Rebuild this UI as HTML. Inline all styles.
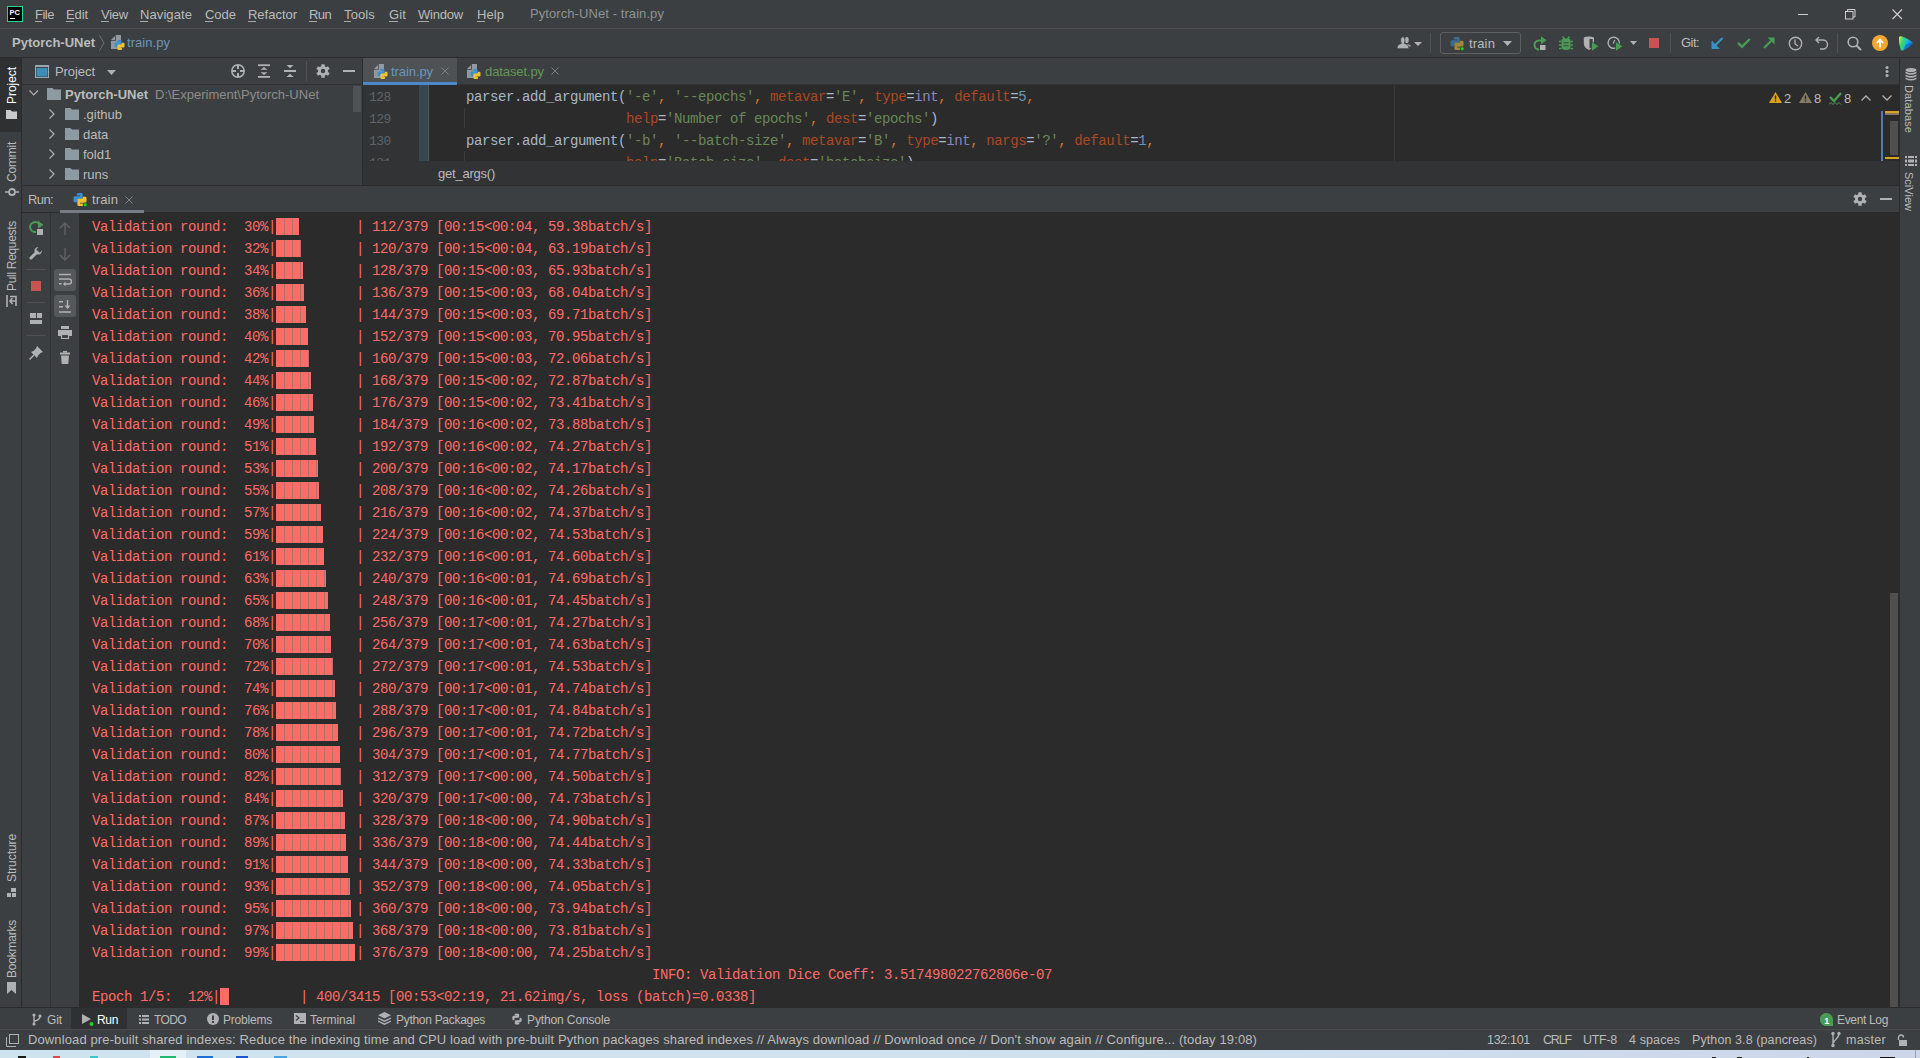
<!DOCTYPE html>
<html><head><meta charset="utf-8"><style>
*{margin:0;padding:0;box-sizing:border-box}
html,body{width:1920px;height:1058px;overflow:hidden;background:#3C3F41;position:relative}
.a{position:absolute}
.t{position:absolute;white-space:pre}
.code{position:absolute;margin-top:-11px;font-family:"Liberation Mono",monospace;font-size:14px;letter-spacing:-0.401px;line-height:14px;white-space:pre}
.lnum{position:absolute;left:369px;margin-top:-10px;font-family:"Liberation Mono",monospace;font-size:13px;letter-spacing:-0.6px;line-height:14px;color:#606366;white-space:pre}
.mono{position:absolute;left:92px;margin-top:-10px;font-family:"Liberation Mono",monospace;font-size:14px;letter-spacing:-0.401px;line-height:14px;color:#FF6B68;white-space:pre}
</style></head><body>
<div class="a" style="left:0px;top:0px;width:1920px;height:1058px;background:#3C3F41;"></div>
<div class="a" style="left:0px;top:28px;width:1920px;height:1px;background:#515151;"></div>
<div class="a" style="left:0px;top:57px;width:1920px;height:1px;background:#2B2B2B;"></div>
<div class="a" style="left:21px;top:58px;width:1px;height:949px;background:#2B2B2B;"></div>
<div class="a" style="left:0px;top:58px;width:21px;height:74px;background:#2E3032;"></div>
<div class="a" style="left:1899px;top:58px;width:1px;height:949px;background:#2B2B2B;"></div>
<div class="a" style="left:362px;top:58px;width:1px;height:127px;background:#2B2B2B;"></div>
<div class="a" style="left:22px;top:84px;width:340px;height:1px;background:#323232;"></div>
<div class="a" style="left:363px;top:58px;width:94px;height:24px;background:#4E5254;"></div>
<div class="a" style="left:363px;top:82px;width:94px;height:3px;background:#4A88C7;"></div>
<div class="a" style="left:457px;top:84px;width:1442px;height:1px;background:#323232;"></div>
<div class="a" style="left:363px;top:85px;width:1536px;height:76px;background:#2B2B2B;"></div>
<div class="a" style="left:363px;top:85px;width:56px;height:76px;background:#313335;"></div>
<div class="a" style="left:419px;top:85px;width:9px;height:76px;background:#374752;"></div>
<div class="a" style="left:428px;top:85px;width:1px;height:76px;background:#555555;"></div>
<div class="a" style="left:363px;top:161px;width:1536px;height:24px;background:#313335;"></div>
<div class="a" style="left:363px;top:161px;width:1536px;height:1px;background:#323232;"></div>
<div class="a" style="left:22px;top:185px;width:1877px;height:1px;background:#2B2B2B;"></div>
<div class="a" style="left:50px;top:213px;width:1px;height:794px;background:#323232;"></div>
<div class="a" style="left:79px;top:213px;width:1820px;height:794px;background:#2B2B2B;"></div>
<div class="a" style="left:22px;top:212px;width:1877px;height:1px;background:#2B2B2B;"></div>
<div class="a" style="left:60px;top:210px;width:84px;height:3px;background:#787C84;"></div>
<div class="a" style="left:0px;top:1007px;width:1920px;height:1px;background:#2B2B2B;"></div>
<div class="a" style="left:71px;top:1008px;width:56px;height:21px;background:#2E3032;"></div>
<div class="a" style="left:0px;top:1029px;width:1920px;height:1px;background:#4A4A4A;"></div>
<div class="a" style="left:0px;top:1050px;width:1920px;height:8px;background:#CFE3EE;"></div>
<div class="mono" style="top:230px">Validation round:  30%|          | 112/379 [00:15&lt;00:04, 59.38batch/s]</div>
<div class="a" style="left:276px;top:218px;width:23px;height:17px;background:#FF6B68;"></div>
<div class="a" style="left:284px;top:218px;width:1px;height:17px;background:#B86E6B;"></div>
<div class="a" style="left:292px;top:218px;width:1px;height:17px;background:#B86E6B;"></div>
<div class="mono" style="top:252px">Validation round:  32%|          | 120/379 [00:15&lt;00:04, 63.19batch/s]</div>
<div class="a" style="left:276px;top:240px;width:25px;height:17px;background:#FF6B68;"></div>
<div class="a" style="left:284px;top:240px;width:1px;height:17px;background:#B86E6B;"></div>
<div class="a" style="left:292px;top:240px;width:1px;height:17px;background:#B86E6B;"></div>
<div class="a" style="left:300px;top:240px;width:1px;height:17px;background:#B86E6B;"></div>
<div class="mono" style="top:274px">Validation round:  34%|          | 128/379 [00:15&lt;00:03, 65.93batch/s]</div>
<div class="a" style="left:276px;top:262px;width:27px;height:17px;background:#FF6B68;"></div>
<div class="a" style="left:284px;top:262px;width:1px;height:17px;background:#B86E6B;"></div>
<div class="a" style="left:292px;top:262px;width:1px;height:17px;background:#B86E6B;"></div>
<div class="a" style="left:300px;top:262px;width:1px;height:17px;background:#B86E6B;"></div>
<div class="mono" style="top:296px">Validation round:  36%|          | 136/379 [00:15&lt;00:03, 68.04batch/s]</div>
<div class="a" style="left:276px;top:284px;width:28px;height:17px;background:#FF6B68;"></div>
<div class="a" style="left:284px;top:284px;width:1px;height:17px;background:#B86E6B;"></div>
<div class="a" style="left:292px;top:284px;width:1px;height:17px;background:#B86E6B;"></div>
<div class="a" style="left:300px;top:284px;width:1px;height:17px;background:#B86E6B;"></div>
<div class="mono" style="top:318px">Validation round:  38%|          | 144/379 [00:15&lt;00:03, 69.71batch/s]</div>
<div class="a" style="left:276px;top:306px;width:30px;height:17px;background:#FF6B68;"></div>
<div class="a" style="left:284px;top:306px;width:1px;height:17px;background:#B86E6B;"></div>
<div class="a" style="left:292px;top:306px;width:1px;height:17px;background:#B86E6B;"></div>
<div class="a" style="left:300px;top:306px;width:1px;height:17px;background:#B86E6B;"></div>
<div class="mono" style="top:340px">Validation round:  40%|          | 152/379 [00:15&lt;00:03, 70.95batch/s]</div>
<div class="a" style="left:276px;top:328px;width:32px;height:17px;background:#FF6B68;"></div>
<div class="a" style="left:284px;top:328px;width:1px;height:17px;background:#B86E6B;"></div>
<div class="a" style="left:292px;top:328px;width:1px;height:17px;background:#B86E6B;"></div>
<div class="a" style="left:300px;top:328px;width:1px;height:17px;background:#B86E6B;"></div>
<div class="mono" style="top:362px">Validation round:  42%|          | 160/379 [00:15&lt;00:03, 72.06batch/s]</div>
<div class="a" style="left:276px;top:350px;width:33px;height:17px;background:#FF6B68;"></div>
<div class="a" style="left:284px;top:350px;width:1px;height:17px;background:#B86E6B;"></div>
<div class="a" style="left:292px;top:350px;width:1px;height:17px;background:#B86E6B;"></div>
<div class="a" style="left:300px;top:350px;width:1px;height:17px;background:#B86E6B;"></div>
<div class="a" style="left:308px;top:350px;width:1px;height:17px;background:#B86E6B;"></div>
<div class="mono" style="top:384px">Validation round:  44%|          | 168/379 [00:15&lt;00:02, 72.87batch/s]</div>
<div class="a" style="left:276px;top:372px;width:35px;height:17px;background:#FF6B68;"></div>
<div class="a" style="left:284px;top:372px;width:1px;height:17px;background:#B86E6B;"></div>
<div class="a" style="left:292px;top:372px;width:1px;height:17px;background:#B86E6B;"></div>
<div class="a" style="left:300px;top:372px;width:1px;height:17px;background:#B86E6B;"></div>
<div class="a" style="left:308px;top:372px;width:1px;height:17px;background:#B86E6B;"></div>
<div class="mono" style="top:406px">Validation round:  46%|          | 176/379 [00:15&lt;00:02, 73.41batch/s]</div>
<div class="a" style="left:276px;top:394px;width:37px;height:17px;background:#FF6B68;"></div>
<div class="a" style="left:284px;top:394px;width:1px;height:17px;background:#B86E6B;"></div>
<div class="a" style="left:292px;top:394px;width:1px;height:17px;background:#B86E6B;"></div>
<div class="a" style="left:300px;top:394px;width:1px;height:17px;background:#B86E6B;"></div>
<div class="a" style="left:308px;top:394px;width:1px;height:17px;background:#B86E6B;"></div>
<div class="mono" style="top:428px">Validation round:  49%|          | 184/379 [00:16&lt;00:02, 73.88batch/s]</div>
<div class="a" style="left:276px;top:416px;width:38px;height:17px;background:#FF6B68;"></div>
<div class="a" style="left:284px;top:416px;width:1px;height:17px;background:#B86E6B;"></div>
<div class="a" style="left:292px;top:416px;width:1px;height:17px;background:#B86E6B;"></div>
<div class="a" style="left:300px;top:416px;width:1px;height:17px;background:#B86E6B;"></div>
<div class="a" style="left:308px;top:416px;width:1px;height:17px;background:#B86E6B;"></div>
<div class="mono" style="top:450px">Validation round:  51%|          | 192/379 [00:16&lt;00:02, 74.27batch/s]</div>
<div class="a" style="left:276px;top:438px;width:40px;height:17px;background:#FF6B68;"></div>
<div class="a" style="left:284px;top:438px;width:1px;height:17px;background:#B86E6B;"></div>
<div class="a" style="left:292px;top:438px;width:1px;height:17px;background:#B86E6B;"></div>
<div class="a" style="left:300px;top:438px;width:1px;height:17px;background:#B86E6B;"></div>
<div class="a" style="left:308px;top:438px;width:1px;height:17px;background:#B86E6B;"></div>
<div class="mono" style="top:472px">Validation round:  53%|          | 200/379 [00:16&lt;00:02, 74.17batch/s]</div>
<div class="a" style="left:276px;top:460px;width:42px;height:17px;background:#FF6B68;"></div>
<div class="a" style="left:284px;top:460px;width:1px;height:17px;background:#B86E6B;"></div>
<div class="a" style="left:292px;top:460px;width:1px;height:17px;background:#B86E6B;"></div>
<div class="a" style="left:300px;top:460px;width:1px;height:17px;background:#B86E6B;"></div>
<div class="a" style="left:308px;top:460px;width:1px;height:17px;background:#B86E6B;"></div>
<div class="a" style="left:316px;top:460px;width:1px;height:17px;background:#B86E6B;"></div>
<div class="mono" style="top:494px">Validation round:  55%|          | 208/379 [00:16&lt;00:02, 74.26batch/s]</div>
<div class="a" style="left:276px;top:482px;width:43px;height:17px;background:#FF6B68;"></div>
<div class="a" style="left:284px;top:482px;width:1px;height:17px;background:#B86E6B;"></div>
<div class="a" style="left:292px;top:482px;width:1px;height:17px;background:#B86E6B;"></div>
<div class="a" style="left:300px;top:482px;width:1px;height:17px;background:#B86E6B;"></div>
<div class="a" style="left:308px;top:482px;width:1px;height:17px;background:#B86E6B;"></div>
<div class="a" style="left:316px;top:482px;width:1px;height:17px;background:#B86E6B;"></div>
<div class="mono" style="top:516px">Validation round:  57%|          | 216/379 [00:16&lt;00:02, 74.37batch/s]</div>
<div class="a" style="left:276px;top:504px;width:45px;height:17px;background:#FF6B68;"></div>
<div class="a" style="left:284px;top:504px;width:1px;height:17px;background:#B86E6B;"></div>
<div class="a" style="left:292px;top:504px;width:1px;height:17px;background:#B86E6B;"></div>
<div class="a" style="left:300px;top:504px;width:1px;height:17px;background:#B86E6B;"></div>
<div class="a" style="left:308px;top:504px;width:1px;height:17px;background:#B86E6B;"></div>
<div class="a" style="left:316px;top:504px;width:1px;height:17px;background:#B86E6B;"></div>
<div class="mono" style="top:538px">Validation round:  59%|          | 224/379 [00:16&lt;00:02, 74.53batch/s]</div>
<div class="a" style="left:276px;top:526px;width:47px;height:17px;background:#FF6B68;"></div>
<div class="a" style="left:284px;top:526px;width:1px;height:17px;background:#B86E6B;"></div>
<div class="a" style="left:292px;top:526px;width:1px;height:17px;background:#B86E6B;"></div>
<div class="a" style="left:300px;top:526px;width:1px;height:17px;background:#B86E6B;"></div>
<div class="a" style="left:308px;top:526px;width:1px;height:17px;background:#B86E6B;"></div>
<div class="a" style="left:316px;top:526px;width:1px;height:17px;background:#B86E6B;"></div>
<div class="mono" style="top:560px">Validation round:  61%|          | 232/379 [00:16&lt;00:01, 74.60batch/s]</div>
<div class="a" style="left:276px;top:548px;width:48px;height:17px;background:#FF6B68;"></div>
<div class="a" style="left:284px;top:548px;width:1px;height:17px;background:#B86E6B;"></div>
<div class="a" style="left:292px;top:548px;width:1px;height:17px;background:#B86E6B;"></div>
<div class="a" style="left:300px;top:548px;width:1px;height:17px;background:#B86E6B;"></div>
<div class="a" style="left:308px;top:548px;width:1px;height:17px;background:#B86E6B;"></div>
<div class="a" style="left:316px;top:548px;width:1px;height:17px;background:#B86E6B;"></div>
<div class="mono" style="top:582px">Validation round:  63%|          | 240/379 [00:16&lt;00:01, 74.69batch/s]</div>
<div class="a" style="left:276px;top:570px;width:50px;height:17px;background:#FF6B68;"></div>
<div class="a" style="left:284px;top:570px;width:1px;height:17px;background:#B86E6B;"></div>
<div class="a" style="left:292px;top:570px;width:1px;height:17px;background:#B86E6B;"></div>
<div class="a" style="left:300px;top:570px;width:1px;height:17px;background:#B86E6B;"></div>
<div class="a" style="left:308px;top:570px;width:1px;height:17px;background:#B86E6B;"></div>
<div class="a" style="left:316px;top:570px;width:1px;height:17px;background:#B86E6B;"></div>
<div class="a" style="left:324px;top:570px;width:1px;height:17px;background:#B86E6B;"></div>
<div class="mono" style="top:604px">Validation round:  65%|          | 248/379 [00:16&lt;00:01, 74.45batch/s]</div>
<div class="a" style="left:276px;top:592px;width:52px;height:17px;background:#FF6B68;"></div>
<div class="a" style="left:284px;top:592px;width:1px;height:17px;background:#B86E6B;"></div>
<div class="a" style="left:292px;top:592px;width:1px;height:17px;background:#B86E6B;"></div>
<div class="a" style="left:300px;top:592px;width:1px;height:17px;background:#B86E6B;"></div>
<div class="a" style="left:308px;top:592px;width:1px;height:17px;background:#B86E6B;"></div>
<div class="a" style="left:316px;top:592px;width:1px;height:17px;background:#B86E6B;"></div>
<div class="a" style="left:324px;top:592px;width:1px;height:17px;background:#B86E6B;"></div>
<div class="mono" style="top:626px">Validation round:  68%|          | 256/379 [00:17&lt;00:01, 74.27batch/s]</div>
<div class="a" style="left:276px;top:614px;width:54px;height:17px;background:#FF6B68;"></div>
<div class="a" style="left:284px;top:614px;width:1px;height:17px;background:#B86E6B;"></div>
<div class="a" style="left:292px;top:614px;width:1px;height:17px;background:#B86E6B;"></div>
<div class="a" style="left:300px;top:614px;width:1px;height:17px;background:#B86E6B;"></div>
<div class="a" style="left:308px;top:614px;width:1px;height:17px;background:#B86E6B;"></div>
<div class="a" style="left:316px;top:614px;width:1px;height:17px;background:#B86E6B;"></div>
<div class="a" style="left:324px;top:614px;width:1px;height:17px;background:#B86E6B;"></div>
<div class="mono" style="top:648px">Validation round:  70%|          | 264/379 [00:17&lt;00:01, 74.63batch/s]</div>
<div class="a" style="left:276px;top:636px;width:55px;height:17px;background:#FF6B68;"></div>
<div class="a" style="left:284px;top:636px;width:1px;height:17px;background:#B86E6B;"></div>
<div class="a" style="left:292px;top:636px;width:1px;height:17px;background:#B86E6B;"></div>
<div class="a" style="left:300px;top:636px;width:1px;height:17px;background:#B86E6B;"></div>
<div class="a" style="left:308px;top:636px;width:1px;height:17px;background:#B86E6B;"></div>
<div class="a" style="left:316px;top:636px;width:1px;height:17px;background:#B86E6B;"></div>
<div class="a" style="left:324px;top:636px;width:1px;height:17px;background:#B86E6B;"></div>
<div class="mono" style="top:670px">Validation round:  72%|          | 272/379 [00:17&lt;00:01, 74.53batch/s]</div>
<div class="a" style="left:276px;top:658px;width:57px;height:17px;background:#FF6B68;"></div>
<div class="a" style="left:284px;top:658px;width:1px;height:17px;background:#B86E6B;"></div>
<div class="a" style="left:292px;top:658px;width:1px;height:17px;background:#B86E6B;"></div>
<div class="a" style="left:300px;top:658px;width:1px;height:17px;background:#B86E6B;"></div>
<div class="a" style="left:308px;top:658px;width:1px;height:17px;background:#B86E6B;"></div>
<div class="a" style="left:316px;top:658px;width:1px;height:17px;background:#B86E6B;"></div>
<div class="a" style="left:324px;top:658px;width:1px;height:17px;background:#B86E6B;"></div>
<div class="a" style="left:332px;top:658px;width:1px;height:17px;background:#B86E6B;"></div>
<div class="mono" style="top:692px">Validation round:  74%|          | 280/379 [00:17&lt;00:01, 74.74batch/s]</div>
<div class="a" style="left:276px;top:680px;width:59px;height:17px;background:#FF6B68;"></div>
<div class="a" style="left:284px;top:680px;width:1px;height:17px;background:#B86E6B;"></div>
<div class="a" style="left:292px;top:680px;width:1px;height:17px;background:#B86E6B;"></div>
<div class="a" style="left:300px;top:680px;width:1px;height:17px;background:#B86E6B;"></div>
<div class="a" style="left:308px;top:680px;width:1px;height:17px;background:#B86E6B;"></div>
<div class="a" style="left:316px;top:680px;width:1px;height:17px;background:#B86E6B;"></div>
<div class="a" style="left:324px;top:680px;width:1px;height:17px;background:#B86E6B;"></div>
<div class="a" style="left:332px;top:680px;width:1px;height:17px;background:#B86E6B;"></div>
<div class="mono" style="top:714px">Validation round:  76%|          | 288/379 [00:17&lt;00:01, 74.84batch/s]</div>
<div class="a" style="left:276px;top:702px;width:60px;height:17px;background:#FF6B68;"></div>
<div class="a" style="left:284px;top:702px;width:1px;height:17px;background:#B86E6B;"></div>
<div class="a" style="left:292px;top:702px;width:1px;height:17px;background:#B86E6B;"></div>
<div class="a" style="left:300px;top:702px;width:1px;height:17px;background:#B86E6B;"></div>
<div class="a" style="left:308px;top:702px;width:1px;height:17px;background:#B86E6B;"></div>
<div class="a" style="left:316px;top:702px;width:1px;height:17px;background:#B86E6B;"></div>
<div class="a" style="left:324px;top:702px;width:1px;height:17px;background:#B86E6B;"></div>
<div class="a" style="left:332px;top:702px;width:1px;height:17px;background:#B86E6B;"></div>
<div class="mono" style="top:736px">Validation round:  78%|          | 296/379 [00:17&lt;00:01, 74.72batch/s]</div>
<div class="a" style="left:276px;top:724px;width:62px;height:17px;background:#FF6B68;"></div>
<div class="a" style="left:284px;top:724px;width:1px;height:17px;background:#B86E6B;"></div>
<div class="a" style="left:292px;top:724px;width:1px;height:17px;background:#B86E6B;"></div>
<div class="a" style="left:300px;top:724px;width:1px;height:17px;background:#B86E6B;"></div>
<div class="a" style="left:308px;top:724px;width:1px;height:17px;background:#B86E6B;"></div>
<div class="a" style="left:316px;top:724px;width:1px;height:17px;background:#B86E6B;"></div>
<div class="a" style="left:324px;top:724px;width:1px;height:17px;background:#B86E6B;"></div>
<div class="a" style="left:332px;top:724px;width:1px;height:17px;background:#B86E6B;"></div>
<div class="mono" style="top:758px">Validation round:  80%|          | 304/379 [00:17&lt;00:01, 74.77batch/s]</div>
<div class="a" style="left:276px;top:746px;width:64px;height:17px;background:#FF6B68;"></div>
<div class="a" style="left:284px;top:746px;width:1px;height:17px;background:#B86E6B;"></div>
<div class="a" style="left:292px;top:746px;width:1px;height:17px;background:#B86E6B;"></div>
<div class="a" style="left:300px;top:746px;width:1px;height:17px;background:#B86E6B;"></div>
<div class="a" style="left:308px;top:746px;width:1px;height:17px;background:#B86E6B;"></div>
<div class="a" style="left:316px;top:746px;width:1px;height:17px;background:#B86E6B;"></div>
<div class="a" style="left:324px;top:746px;width:1px;height:17px;background:#B86E6B;"></div>
<div class="a" style="left:332px;top:746px;width:1px;height:17px;background:#B86E6B;"></div>
<div class="mono" style="top:780px">Validation round:  82%|          | 312/379 [00:17&lt;00:00, 74.50batch/s]</div>
<div class="a" style="left:276px;top:768px;width:65px;height:17px;background:#FF6B68;"></div>
<div class="a" style="left:284px;top:768px;width:1px;height:17px;background:#B86E6B;"></div>
<div class="a" style="left:292px;top:768px;width:1px;height:17px;background:#B86E6B;"></div>
<div class="a" style="left:300px;top:768px;width:1px;height:17px;background:#B86E6B;"></div>
<div class="a" style="left:308px;top:768px;width:1px;height:17px;background:#B86E6B;"></div>
<div class="a" style="left:316px;top:768px;width:1px;height:17px;background:#B86E6B;"></div>
<div class="a" style="left:324px;top:768px;width:1px;height:17px;background:#B86E6B;"></div>
<div class="a" style="left:332px;top:768px;width:1px;height:17px;background:#B86E6B;"></div>
<div class="a" style="left:340px;top:768px;width:1px;height:17px;background:#B86E6B;"></div>
<div class="mono" style="top:802px">Validation round:  84%|          | 320/379 [00:17&lt;00:00, 74.73batch/s]</div>
<div class="a" style="left:276px;top:790px;width:67px;height:17px;background:#FF6B68;"></div>
<div class="a" style="left:284px;top:790px;width:1px;height:17px;background:#B86E6B;"></div>
<div class="a" style="left:292px;top:790px;width:1px;height:17px;background:#B86E6B;"></div>
<div class="a" style="left:300px;top:790px;width:1px;height:17px;background:#B86E6B;"></div>
<div class="a" style="left:308px;top:790px;width:1px;height:17px;background:#B86E6B;"></div>
<div class="a" style="left:316px;top:790px;width:1px;height:17px;background:#B86E6B;"></div>
<div class="a" style="left:324px;top:790px;width:1px;height:17px;background:#B86E6B;"></div>
<div class="a" style="left:332px;top:790px;width:1px;height:17px;background:#B86E6B;"></div>
<div class="a" style="left:340px;top:790px;width:1px;height:17px;background:#B86E6B;"></div>
<div class="mono" style="top:824px">Validation round:  87%|          | 328/379 [00:18&lt;00:00, 74.90batch/s]</div>
<div class="a" style="left:276px;top:812px;width:69px;height:17px;background:#FF6B68;"></div>
<div class="a" style="left:284px;top:812px;width:1px;height:17px;background:#B86E6B;"></div>
<div class="a" style="left:292px;top:812px;width:1px;height:17px;background:#B86E6B;"></div>
<div class="a" style="left:300px;top:812px;width:1px;height:17px;background:#B86E6B;"></div>
<div class="a" style="left:308px;top:812px;width:1px;height:17px;background:#B86E6B;"></div>
<div class="a" style="left:316px;top:812px;width:1px;height:17px;background:#B86E6B;"></div>
<div class="a" style="left:324px;top:812px;width:1px;height:17px;background:#B86E6B;"></div>
<div class="a" style="left:332px;top:812px;width:1px;height:17px;background:#B86E6B;"></div>
<div class="a" style="left:340px;top:812px;width:1px;height:17px;background:#B86E6B;"></div>
<div class="mono" style="top:846px">Validation round:  89%|          | 336/379 [00:18&lt;00:00, 74.44batch/s]</div>
<div class="a" style="left:276px;top:834px;width:70px;height:17px;background:#FF6B68;"></div>
<div class="a" style="left:284px;top:834px;width:1px;height:17px;background:#B86E6B;"></div>
<div class="a" style="left:292px;top:834px;width:1px;height:17px;background:#B86E6B;"></div>
<div class="a" style="left:300px;top:834px;width:1px;height:17px;background:#B86E6B;"></div>
<div class="a" style="left:308px;top:834px;width:1px;height:17px;background:#B86E6B;"></div>
<div class="a" style="left:316px;top:834px;width:1px;height:17px;background:#B86E6B;"></div>
<div class="a" style="left:324px;top:834px;width:1px;height:17px;background:#B86E6B;"></div>
<div class="a" style="left:332px;top:834px;width:1px;height:17px;background:#B86E6B;"></div>
<div class="a" style="left:340px;top:834px;width:1px;height:17px;background:#B86E6B;"></div>
<div class="mono" style="top:868px">Validation round:  91%|          | 344/379 [00:18&lt;00:00, 74.33batch/s]</div>
<div class="a" style="left:276px;top:856px;width:72px;height:17px;background:#FF6B68;"></div>
<div class="a" style="left:284px;top:856px;width:1px;height:17px;background:#B86E6B;"></div>
<div class="a" style="left:292px;top:856px;width:1px;height:17px;background:#B86E6B;"></div>
<div class="a" style="left:300px;top:856px;width:1px;height:17px;background:#B86E6B;"></div>
<div class="a" style="left:308px;top:856px;width:1px;height:17px;background:#B86E6B;"></div>
<div class="a" style="left:316px;top:856px;width:1px;height:17px;background:#B86E6B;"></div>
<div class="a" style="left:324px;top:856px;width:1px;height:17px;background:#B86E6B;"></div>
<div class="a" style="left:332px;top:856px;width:1px;height:17px;background:#B86E6B;"></div>
<div class="a" style="left:340px;top:856px;width:1px;height:17px;background:#B86E6B;"></div>
<div class="mono" style="top:890px">Validation round:  93%|          | 352/379 [00:18&lt;00:00, 74.05batch/s]</div>
<div class="a" style="left:276px;top:878px;width:74px;height:17px;background:#FF6B68;"></div>
<div class="a" style="left:284px;top:878px;width:1px;height:17px;background:#B86E6B;"></div>
<div class="a" style="left:292px;top:878px;width:1px;height:17px;background:#B86E6B;"></div>
<div class="a" style="left:300px;top:878px;width:1px;height:17px;background:#B86E6B;"></div>
<div class="a" style="left:308px;top:878px;width:1px;height:17px;background:#B86E6B;"></div>
<div class="a" style="left:316px;top:878px;width:1px;height:17px;background:#B86E6B;"></div>
<div class="a" style="left:324px;top:878px;width:1px;height:17px;background:#B86E6B;"></div>
<div class="a" style="left:332px;top:878px;width:1px;height:17px;background:#B86E6B;"></div>
<div class="a" style="left:340px;top:878px;width:1px;height:17px;background:#B86E6B;"></div>
<div class="a" style="left:348px;top:878px;width:1px;height:17px;background:#B86E6B;"></div>
<div class="mono" style="top:912px">Validation round:  95%|          | 360/379 [00:18&lt;00:00, 73.94batch/s]</div>
<div class="a" style="left:276px;top:900px;width:75px;height:17px;background:#FF6B68;"></div>
<div class="a" style="left:284px;top:900px;width:1px;height:17px;background:#B86E6B;"></div>
<div class="a" style="left:292px;top:900px;width:1px;height:17px;background:#B86E6B;"></div>
<div class="a" style="left:300px;top:900px;width:1px;height:17px;background:#B86E6B;"></div>
<div class="a" style="left:308px;top:900px;width:1px;height:17px;background:#B86E6B;"></div>
<div class="a" style="left:316px;top:900px;width:1px;height:17px;background:#B86E6B;"></div>
<div class="a" style="left:324px;top:900px;width:1px;height:17px;background:#B86E6B;"></div>
<div class="a" style="left:332px;top:900px;width:1px;height:17px;background:#B86E6B;"></div>
<div class="a" style="left:340px;top:900px;width:1px;height:17px;background:#B86E6B;"></div>
<div class="a" style="left:348px;top:900px;width:1px;height:17px;background:#B86E6B;"></div>
<div class="mono" style="top:934px">Validation round:  97%|          | 368/379 [00:18&lt;00:00, 73.81batch/s]</div>
<div class="a" style="left:276px;top:922px;width:77px;height:17px;background:#FF6B68;"></div>
<div class="a" style="left:284px;top:922px;width:1px;height:17px;background:#B86E6B;"></div>
<div class="a" style="left:292px;top:922px;width:1px;height:17px;background:#B86E6B;"></div>
<div class="a" style="left:300px;top:922px;width:1px;height:17px;background:#B86E6B;"></div>
<div class="a" style="left:308px;top:922px;width:1px;height:17px;background:#B86E6B;"></div>
<div class="a" style="left:316px;top:922px;width:1px;height:17px;background:#B86E6B;"></div>
<div class="a" style="left:324px;top:922px;width:1px;height:17px;background:#B86E6B;"></div>
<div class="a" style="left:332px;top:922px;width:1px;height:17px;background:#B86E6B;"></div>
<div class="a" style="left:340px;top:922px;width:1px;height:17px;background:#B86E6B;"></div>
<div class="a" style="left:348px;top:922px;width:1px;height:17px;background:#B86E6B;"></div>
<div class="mono" style="top:956px">Validation round:  99%|          | 376/379 [00:18&lt;00:00, 74.25batch/s]</div>
<div class="a" style="left:276px;top:944px;width:79px;height:17px;background:#FF6B68;"></div>
<div class="a" style="left:284px;top:944px;width:1px;height:17px;background:#B86E6B;"></div>
<div class="a" style="left:292px;top:944px;width:1px;height:17px;background:#B86E6B;"></div>
<div class="a" style="left:300px;top:944px;width:1px;height:17px;background:#B86E6B;"></div>
<div class="a" style="left:308px;top:944px;width:1px;height:17px;background:#B86E6B;"></div>
<div class="a" style="left:316px;top:944px;width:1px;height:17px;background:#B86E6B;"></div>
<div class="a" style="left:324px;top:944px;width:1px;height:17px;background:#B86E6B;"></div>
<div class="a" style="left:332px;top:944px;width:1px;height:17px;background:#B86E6B;"></div>
<div class="a" style="left:340px;top:944px;width:1px;height:17px;background:#B86E6B;"></div>
<div class="a" style="left:348px;top:944px;width:1px;height:17px;background:#B86E6B;"></div>
<div class="mono" style="top:978px">                                                                      INFO: Validation Dice Coeff: 3.517498022762806e-07</div>
<div class="mono" style="top:1000px">Epoch 1/5:  12%|          | 400/3415 [00:53&lt;02:19, 21.62img/s, loss (batch)=0.0338]</div>
<div class="a" style="left:220px;top:988px;width:9px;height:17px;background:#FF6B68;"></div>
<div class="a" style="left:1890px;top:593px;width:8px;height:414px;background:#4F4F4F;"></div>
<svg class="a" style="left:7px;top:6px;" width="16" height="16" viewBox="0 0 16 16"><rect x="0.5" y="0.5" width="15" height="15" fill="#000" stroke="#21D789" stroke-width="1"/><text x="2.5" y="9" font-family="Liberation Sans" font-weight="bold" font-size="7.5" fill="#fff">PC</text><rect x="3" y="12" width="5" height="1" fill="#fff"/></svg>
<div class="t" style="left:35px;top:8px;font-size:13px;line-height:13px;color:#BBBBBB;font-family:'Liberation Sans',sans-serif;letter-spacing:-0.487px;">File</div>
<div class="a" style="left:35px;top:21px;width:7px;height:1px;background:#BBBBBB;opacity:.85"></div>
<div class="t" style="left:66px;top:8px;font-size:13px;line-height:13px;color:#BBBBBB;font-family:'Liberation Sans',sans-serif;letter-spacing:-0.100px;">Edit</div>
<div class="a" style="left:66px;top:21px;width:8px;height:1px;background:#BBBBBB;opacity:.85"></div>
<div class="t" style="left:101px;top:8px;font-size:13px;line-height:13px;color:#BBBBBB;font-family:'Liberation Sans',sans-serif;letter-spacing:-0.236px;">View</div>
<div class="a" style="left:101px;top:21px;width:8px;height:1px;background:#BBBBBB;opacity:.85"></div>
<div class="t" style="left:140px;top:8px;font-size:13px;line-height:13px;color:#BBBBBB;font-family:'Liberation Sans',sans-serif;letter-spacing:0.086px;">Navigate</div>
<div class="a" style="left:140px;top:21px;width:8px;height:1px;background:#BBBBBB;opacity:.85"></div>
<div class="t" style="left:205px;top:8px;font-size:13px;line-height:13px;color:#BBBBBB;font-family:'Liberation Sans',sans-serif;letter-spacing:-0.020px;">Code</div>
<div class="a" style="left:205px;top:21px;width:8px;height:1px;background:#BBBBBB;opacity:.85"></div>
<div class="t" style="left:248px;top:8px;font-size:13px;line-height:13px;color:#BBBBBB;font-family:'Liberation Sans',sans-serif;letter-spacing:-0.016px;">Refactor</div>
<div class="a" style="left:248px;top:21px;width:8px;height:1px;background:#BBBBBB;opacity:.85"></div>
<div class="t" style="left:309px;top:8px;font-size:13px;line-height:13px;color:#BBBBBB;font-family:'Liberation Sans',sans-serif;letter-spacing:-0.616px;">Run</div>
<div class="a" style="left:309px;top:21px;width:8px;height:1px;background:#BBBBBB;opacity:.85"></div>
<div class="t" style="left:344px;top:8px;font-size:13px;line-height:13px;color:#BBBBBB;font-family:'Liberation Sans',sans-serif;letter-spacing:0.130px;">Tools</div>
<div class="a" style="left:344px;top:21px;width:7px;height:1px;background:#BBBBBB;opacity:.85"></div>
<div class="t" style="left:389px;top:8px;font-size:13px;line-height:13px;color:#BBBBBB;font-family:'Liberation Sans',sans-serif;letter-spacing:0.129px;">Git</div>
<div class="a" style="left:389px;top:21px;width:9px;height:1px;background:#BBBBBB;opacity:.85"></div>
<div class="t" style="left:418px;top:8px;font-size:13px;line-height:13px;color:#BBBBBB;font-family:'Liberation Sans',sans-serif;letter-spacing:-0.206px;">Window</div>
<div class="a" style="left:418px;top:21px;width:11px;height:1px;background:#BBBBBB;opacity:.85"></div>
<div class="t" style="left:477px;top:8px;font-size:13px;line-height:13px;color:#BBBBBB;font-family:'Liberation Sans',sans-serif;letter-spacing:0.066px;">Help</div>
<div class="a" style="left:477px;top:21px;width:8px;height:1px;background:#BBBBBB;opacity:.85"></div>
<div class="t" style="left:530px;top:7px;font-size:13px;line-height:13px;color:#8F9294;font-family:'Liberation Sans',sans-serif;letter-spacing:0.078px;">Pytorch-UNet - train.py</div>
<div class="a" style="left:1798px;top:14px;width:10px;height:1px;background:#CFCFCF;"></div>
<svg class="a" style="left:1845px;top:9px;" width="11" height="11" viewBox="0 0 11 11"><rect x="0.5" y="2.5" width="7.5" height="7.5" fill="none" stroke="#CFCFCF"/><path d="M2.5 2.5V0.5H10V8H8" fill="none" stroke="#CFCFCF"/></svg>
<svg class="a" style="left:1892px;top:9px;" width="11" height="11" viewBox="0 0 11 11"><path d="M0.5 0.5L10 10M10 0.5L0.5 10" stroke="#CFCFCF" stroke-width="1.1"/></svg>
<div class="t" style="left:12px;top:36px;font-size:13px;line-height:13px;color:#BBBBBB;font-family:'Liberation Sans',sans-serif;font-weight:bold;letter-spacing:-0.005px;">Pytorch-UNet</div>
<svg class="a" style="left:99px;top:35px;" width="6" height="16" viewBox="0 0 6 16"><path d="M0.5 0.5L5 8L0.5 15.5" fill="none" stroke="#6E6E6E" stroke-width="1"/></svg>
<svg class="a" style="left:111px;top:35px;" width="15" height="16" viewBox="0 0 15 16"><path d="M0 5L4 1V5Z" fill="#9199A0"/><path d="M4.8 0H10V14H0V5.8H4.8Z" fill="#9199A0"/><g transform="translate(3.5,5)"><path d="M2.5 1Q2.5 0 3.5 0H6Q7 0 7 1V4.5Q7 5.5 6 5.5H3.6Q2.8 5.5 2.8 6.3V7.2H1Q0 7.2 0 6.2V3.5Q0 2.5 1 2.5H5V2H2.5Z" fill="#3D8FD1"/><path d="M7.5 9Q7.5 10 6.5 10H4Q3 10 3 9V5.5Q3 4.5 4 4.5H6.4Q7.2 4.5 7.2 3.7V2.8H9Q10 2.8 10 3.8V6.5Q10 7.5 9 7.5H5V8H7.5Z" fill="#F2C42C"/></g></svg>
<div class="t" style="left:127px;top:36px;font-size:13px;line-height:13px;color:#6897BB;font-family:'Liberation Sans',sans-serif;letter-spacing:0.046px;">train.py</div>
<svg class="a" style="left:1396px;top:36px;" width="27" height="14" viewBox="0 0 27 14"><g fill="#AFB1B3"><ellipse cx="10.8" cy="4" rx="1.9" ry="3.1"/><path d="M10 8Q14.5 8.3 15 10.3L13 10.5Z"/></g><path d="M4.6 4Q4.6 0.8 6.8 0.8Q9 0.8 9 4Q9 6.3 8.2 7.4Q13 8.2 13 12.8H1Q1 8.2 5.4 7.4Q4.6 6.3 4.6 4Z" fill="#AFB1B3" stroke="#3C3F41" stroke-width="0.8"/><path d="M18 6H26L22 10Z" fill="#AFB1B3"/></svg>
<div class="a" style="left:1430px;top:33px;width:1px;height:20px;background:#515151;"></div>
<div class="a" style="left:1440px;top:32px;width:81px;height:22px;border:1px solid #5E6060;border-radius:3px"></div>
<svg class="a" style="left:1450px;top:36px;" width="15" height="15" viewBox="0 0 15 15"><g opacity="0.55"><g transform="translate(0.5,1) scale(1.3)"><path d="M2.5 1Q2.5 0 3.5 0H6Q7 0 7 1V4.5Q7 5.5 6 5.5H3.6Q2.8 5.5 2.8 6.3V7.2H1Q0 7.2 0 6.2V3.5Q0 2.5 1 2.5H5V2H2.5Z" fill="#3D8FD1"/><path d="M7.5 9Q7.5 10 6.5 10H4Q3 10 3 9V5.5Q3 4.5 4 4.5H6.4Q7.2 4.5 7.2 3.7V2.8H9Q10 2.8 10 3.8V6.5Q10 7.5 9 7.5H5V8H7.5Z" fill="#F2C42C"/></g></g><circle cx="12.2" cy="12.8" r="2" fill="#1ED325" stroke="#2B2B2B" stroke-width="0.6"/></svg>
<div class="t" style="left:1469px;top:37px;font-size:13px;line-height:13px;color:#BBBBBB;font-family:'Liberation Sans',sans-serif;letter-spacing:0.142px;">train</div>
<svg class="a" style="left:1503px;top:41px;" width="9" height="6" viewBox="0 0 9 6"><path d="M0 0H9L4.5 5Z" fill="#AFB1B3"/></svg>
<svg class="a" style="left:1532px;top:36px;" width="16" height="16" viewBox="0 0 16 16"><path d="M9.5 4.5H7A4.5 4.5 0 0 0 7 13.5" fill="none" stroke="#499C54" stroke-width="2"/><path d="M9 0.3L14.5 4.3L9 8.3Z" fill="#499C54"/><rect x="8" y="9" width="5.5" height="5" fill="#AFB1B3"/></svg>
<svg class="a" style="left:1558px;top:36px;" width="16" height="15" viewBox="0 0 16 15"><path d="M4.5 0.5L6.5 3M11.5 0.5L9.5 3" stroke="#499C54" stroke-width="1.4"/><path d="M5 2.5H11Q12.5 2.5 12.5 5V10.5Q12.5 14 8 14Q3.5 14 3.5 10.5V5Q3.5 2.5 5 2.5Z" fill="#499C54"/><path d="M5.5 6.8H10.5M5.5 9.8H10.5" stroke="#3C3F41" stroke-width="1.1"/><path d="M1 5.5H3.5M12.5 5.5H15M1 9H3.5M12.5 9H15M1 12.5H3.5M12.5 12.5H15" stroke="#499C54" stroke-width="1.3"/></svg>
<svg class="a" style="left:1583px;top:36px;" width="17" height="16" viewBox="0 0 17 16"><path d="M0.8 1.5Q6 -0.5 11 1.5V7Q11 12 6 14Q0.8 12 0.8 7Z" fill="#AFB1B3"/><path d="M6.5 3H9.6V8Q9.6 11 7 12.5L6.5 12.5Z" fill="#3C3F41"/><path d="M8.5 5.5L16 10.3L8.5 15.5Z" fill="#499C54" stroke="#3C3F41" stroke-width="0.8"/></svg>
<svg class="a" style="left:1607px;top:36px;" width="17" height="16" viewBox="0 0 17 16"><circle cx="6.7" cy="6.8" r="5.6" fill="none" stroke="#AFB1B3" stroke-width="1.4"/><path d="M6.2 7.5L7.8 4" stroke="#AFB1B3" stroke-width="1.2"/><path d="M8.5 5.5L16 10.3L8.5 15.5Z" fill="#499C54" stroke="#3C3F41" stroke-width="0.8"/></svg>
<svg class="a" style="left:1630px;top:41px;" width="7" height="5" viewBox="0 0 7 5"><path d="M0 0H7L3.5 4Z" fill="#AFB1B3"/></svg>
<div class="a" style="left:1649px;top:38px;width:10px;height:10px;background:#C75450;"></div>
<div class="a" style="left:1670px;top:33px;width:1px;height:20px;background:#515151;"></div>
<div class="t" style="left:1681px;top:36px;font-size:13px;line-height:13px;color:#BBBBBB;font-family:'Liberation Sans',sans-serif;letter-spacing:-0.556px;">Git:</div>
<svg class="a" style="left:1711px;top:37px;" width="13" height="12" viewBox="0 0 13 12"><path d="M11.5 1L4 8.5" stroke="#3592C4" stroke-width="2.2"/><path d="M1 4V11.5H8.5Z" fill="#3592C4"/><path d="M1 4L1 11.5L8.5 11.5" fill="none" stroke="#3592C4" stroke-width="1"/></svg>
<svg class="a" style="left:1737px;top:37px;" width="14" height="12" viewBox="0 0 14 12"><path d="M1 5.8L5 9.8L12.8 2" fill="none" stroke="#499C54" stroke-width="2.4"/></svg>
<svg class="a" style="left:1763px;top:36px;" width="13" height="13" viewBox="0 0 13 13"><path d="M1 12L8 5" stroke="#499C54" stroke-width="2.2"/><path d="M4.5 1.5H11.5V8.5Z" fill="#499C54"/></svg>
<svg class="a" style="left:1788px;top:36px;" width="15" height="15" viewBox="0 0 15 15"><circle cx="7.5" cy="7.5" r="6.2" fill="none" stroke="#AFB1B3" stroke-width="1.4"/><path d="M7 3.5V8L10 10" fill="none" stroke="#AFB1B3" stroke-width="1.3"/></svg>
<svg class="a" style="left:1815px;top:36px;" width="14" height="14" viewBox="0 0 14 14"><path d="M4 1L1 4L4 7" fill="none" stroke="#AFB1B3" stroke-width="1.4"/><path d="M1.5 4H8A4.5 4.5 0 0 1 8 13H5" fill="none" stroke="#AFB1B3" stroke-width="1.4"/></svg>
<div class="a" style="left:1837px;top:33px;width:1px;height:20px;background:#515151;"></div>
<svg class="a" style="left:1847px;top:36px;" width="15" height="15" viewBox="0 0 15 15"><circle cx="6" cy="6" r="4.8" fill="none" stroke="#AFB1B3" stroke-width="1.6"/><path d="M9.5 9.5L14 14" stroke="#AFB1B3" stroke-width="2"/></svg>
<svg class="a" style="left:1872px;top:35px;" width="17" height="17" viewBox="0 0 17 17"><circle cx="8" cy="8" r="8" fill="#F0A732"/><path d="M8 12.5V5M4.8 8L8 4.6L11.2 8" fill="none" stroke="#fff" stroke-width="1.8"/></svg>
<svg class="a" style="left:1898px;top:35px;" width="17" height="17" viewBox="0 0 17 17"><defs><linearGradient id="jg" x1="0" y1="0" x2="1" y2="0.3"><stop offset="0" stop-color="#F3F55A"/><stop offset="0.3" stop-color="#3DDA6A"/><stop offset="0.6" stop-color="#1BC0C8"/><stop offset="1" stop-color="#087CFA"/></linearGradient></defs><path d="M1 2Q2 1 4 1.5Q11 3.5 15 8Q11 13 5 15.5Q3 16 2.5 14Q0.5 8 1 2Z" fill="url(#jg)"/><path d="M8 9Q12 8 15 8Q11 13 5 15.5Z" fill="#0A5DC9" opacity="0.6"/></svg>
<div class="t" style="left:5.5px;top:104.0px;font-size:12px;line-height:12px;color:#FFFFFF;font-family:'Liberation Sans',sans-serif;letter-spacing:-0.050px;transform-origin:0 0;transform:rotate(-90deg)">Project</div>
<svg class="a" style="left:6px;top:110px;" width="12" height="9" viewBox="0 0 12 9"><path d="M0 0H4.5L6 1.5H11V9H0Z" fill="#C9C9C9"/></svg>
<div class="t" style="left:5.5px;top:182.0px;font-size:12px;line-height:12px;color:#BBBBBB;font-family:'Liberation Sans',sans-serif;letter-spacing:-0.222px;transform-origin:0 0;transform:rotate(-90deg)">Commit</div>
<svg class="a" style="left:5px;top:187px;" width="14" height="10" viewBox="0 0 14 10"><circle cx="7" cy="5" r="3" fill="none" stroke="#AFB1B3" stroke-width="1.8"/><path d="M0 5H3.5M10.5 5H14" stroke="#AFB1B3" stroke-width="1.6"/></svg>
<div class="t" style="left:5.5px;top:291.0px;font-size:12px;line-height:12px;color:#BBBBBB;font-family:'Liberation Sans',sans-serif;letter-spacing:-0.311px;transform-origin:0 0;transform:rotate(-90deg)">Pull Requests</div>
<svg class="a" style="left:6px;top:295px;" width="11" height="12" viewBox="0 0 11 12"><path d="M1 0V12M4 6H10M6.5 3L4 6L6.5 9" fill="none" stroke="#AFB1B3" stroke-width="1.6"/><path d="M4 1.5H10V11" fill="none" stroke="#AFB1B3" stroke-width="1.6"/></svg>
<div class="t" style="left:5.5px;top:882.0px;font-size:12px;line-height:12px;color:#BBBBBB;font-family:'Liberation Sans',sans-serif;letter-spacing:-0.076px;transform-origin:0 0;transform:rotate(-90deg)">Structure</div>
<svg class="a" style="left:7px;top:888px;" width="10" height="10" viewBox="0 0 10 10"><rect x="4" y="0" width="5" height="4" fill="#AFB1B3"/><rect x="0" y="5" width="4" height="4" fill="#AFB1B3"/><rect x="5" y="5" width="4" height="4" fill="#AFB1B3"/></svg>
<div class="t" style="left:5.5px;top:978.0px;font-size:12px;line-height:12px;color:#BBBBBB;font-family:'Liberation Sans',sans-serif;letter-spacing:-0.224px;transform-origin:0 0;transform:rotate(-90deg)">Bookmarks</div>
<svg class="a" style="left:7px;top:982px;" width="10" height="13" viewBox="0 0 10 13"><path d="M0 0H9V12L4.5 8L0 12Z" fill="#AFB1B3"/></svg>
<svg class="a" style="left:35px;top:65px;" width="14" height="13" viewBox="0 0 14 13"><rect x="0.5" y="0.5" width="13" height="12" fill="none" stroke="#9AA7B0"/><rect x="0" y="0" width="14" height="2" fill="#9AA7B0"/><rect x="1.5" y="3" width="11" height="8.5" fill="#3D8DB5"/></svg>
<div class="t" style="left:55px;top:65px;font-size:13px;line-height:13px;color:#BBBBBB;font-family:'Liberation Sans',sans-serif;letter-spacing:-0.066px;">Project</div>
<svg class="a" style="left:107px;top:70px;" width="9" height="6" viewBox="0 0 9 6"><path d="M0 0H9L4.5 5Z" fill="#AFB1B3"/></svg>
<svg class="a" style="left:231px;top:64px;" width="14" height="14" viewBox="0 0 14 14"><circle cx="7" cy="7" r="6.2" fill="none" stroke="#AFB1B3" stroke-width="1.5"/><g fill="#AFB1B3"><rect x="6" y="1" width="2" height="4"/><rect x="6" y="9" width="2" height="4"/><rect x="1" y="6" width="4" height="2"/><rect x="9" y="6" width="4" height="2"/></g></svg>
<svg class="a" style="left:257px;top:64px;" width="14" height="15" viewBox="0 0 14 15"><g fill="#AFB1B3"><rect x="1" y="0.3" width="12" height="1.8"/><rect x="1" y="12" width="12" height="1.8"/><path d="M3.5 5.8L7 3L10.5 5.8Z"/><path d="M3.5 8.2L7 11L10.5 8.2Z"/></g></svg>
<svg class="a" style="left:283px;top:64px;" width="14" height="15" viewBox="0 0 14 15"><g fill="#AFB1B3"><rect x="1" y="6" width="12" height="2"/><path d="M3.5 1H10.5L7 4.3Z"/><path d="M3.5 13H10.5L7 9.7Z"/></g></svg>
<div class="a" style="left:306px;top:61px;width:1px;height:20px;background:#515151;"></div>
<svg class="a" style="left:316px;top:64px;" width="14" height="14" viewBox="0 0 14 14"><g transform="translate(7,7)" fill="#AFB1B3"><circle r="5"/><rect x="-1.7" y="-6.8" width="3.4" height="13.6" rx="0.6"/><rect x="-1.7" y="-6.8" width="3.4" height="13.6" rx="0.6" transform="rotate(60)"/><rect x="-1.7" y="-6.8" width="3.4" height="13.6" rx="0.6" transform="rotate(120)"/><circle r="2.2" fill="#3C3F41"/></g></svg>
<div class="a" style="left:343px;top:70px;width:12px;height:2px;background:#AFB1B3;"></div>
<svg class="a" style="left:29px;top:90px;" width="10" height="6" viewBox="0 0 10 6"><path d="M0.5 0.5L4.75 5L9 0.5" fill="none" stroke="#AFB1B3" stroke-width="1.2"/></svg>
<svg class="a" style="left:47px;top:88px;" width="14" height="12" viewBox="0 0 14 12"><path d="M0 0H5.5L7 1.5H14V12H0Z" fill="#8D9AA2"/></svg>
<div class="t" style="left:65px;top:88px;font-size:13px;line-height:13px;color:#BBBBBB;font-family:'Liberation Sans',sans-serif;font-weight:bold;letter-spacing:-0.005px;">Pytorch-UNet</div>
<div class="t" style="left:155px;top:88px;font-size:13px;line-height:13px;color:#8C8C8C;font-family:'Liberation Sans',sans-serif;letter-spacing:0.000px;">D:\Experiment\Pytorch-UNet</div>
<svg class="a" style="left:49px;top:109px;" width="6" height="10" viewBox="0 0 6 10"><path d="M0.5 0.5L5 5L0.5 9.5" fill="none" stroke="#AFB1B3" stroke-width="1.2"/></svg>
<svg class="a" style="left:65px;top:108px;" width="14" height="12" viewBox="0 0 14 12"><path d="M0 0H5.5L7 1.5H14V12H0Z" fill="#8D9AA2"/></svg>
<div class="t" style="left:83px;top:108px;font-size:13px;line-height:13px;color:#BBBBBB;font-family:'Liberation Sans',sans-serif;">.github</div>
<svg class="a" style="left:49px;top:129px;" width="6" height="10" viewBox="0 0 6 10"><path d="M0.5 0.5L5 5L0.5 9.5" fill="none" stroke="#AFB1B3" stroke-width="1.2"/></svg>
<svg class="a" style="left:65px;top:128px;" width="14" height="12" viewBox="0 0 14 12"><path d="M0 0H5.5L7 1.5H14V12H0Z" fill="#8D9AA2"/></svg>
<div class="t" style="left:83px;top:128px;font-size:13px;line-height:13px;color:#BBBBBB;font-family:'Liberation Sans',sans-serif;">data</div>
<svg class="a" style="left:49px;top:149px;" width="6" height="10" viewBox="0 0 6 10"><path d="M0.5 0.5L5 5L0.5 9.5" fill="none" stroke="#AFB1B3" stroke-width="1.2"/></svg>
<svg class="a" style="left:65px;top:148px;" width="14" height="12" viewBox="0 0 14 12"><path d="M0 0H5.5L7 1.5H14V12H0Z" fill="#8D9AA2"/></svg>
<div class="t" style="left:83px;top:148px;font-size:13px;line-height:13px;color:#BBBBBB;font-family:'Liberation Sans',sans-serif;">fold1</div>
<svg class="a" style="left:49px;top:169px;" width="6" height="10" viewBox="0 0 6 10"><path d="M0.5 0.5L5 5L0.5 9.5" fill="none" stroke="#AFB1B3" stroke-width="1.2"/></svg>
<svg class="a" style="left:65px;top:168px;" width="14" height="12" viewBox="0 0 14 12"><path d="M0 0H5.5L7 1.5H14V12H0Z" fill="#8D9AA2"/></svg>
<div class="t" style="left:83px;top:168px;font-size:13px;line-height:13px;color:#BBBBBB;font-family:'Liberation Sans',sans-serif;">runs</div>
<div class="a" style="left:353px;top:86px;width:8px;height:26px;background:#4F5254;"></div>
<svg class="a" style="left:374px;top:64px;" width="15" height="16" viewBox="0 0 15 16"><path d="M0 5L4 1V5Z" fill="#9199A0"/><path d="M4.8 0H10V14H0V5.8H4.8Z" fill="#9199A0"/><g transform="translate(3.5,5)"><path d="M2.5 1Q2.5 0 3.5 0H6Q7 0 7 1V4.5Q7 5.5 6 5.5H3.6Q2.8 5.5 2.8 6.3V7.2H1Q0 7.2 0 6.2V3.5Q0 2.5 1 2.5H5V2H2.5Z" fill="#3D8FD1"/><path d="M7.5 9Q7.5 10 6.5 10H4Q3 10 3 9V5.5Q3 4.5 4 4.5H6.4Q7.2 4.5 7.2 3.7V2.8H9Q10 2.8 10 3.8V6.5Q10 7.5 9 7.5H5V8H7.5Z" fill="#F2C42C"/></g></svg>
<div class="t" style="left:391px;top:65px;font-size:13px;line-height:13px;color:#6897BB;font-family:'Liberation Sans',sans-serif;letter-spacing:-0.079px;">train.py</div>
<svg class="a" style="left:441px;top:67px;" width="8" height="8" viewBox="0 0 8 8"><path d="M0.5 0.5L7.5 7.5M7.5 0.5L0.5 7.5" stroke="#7C7E80" stroke-width="1"/></svg>
<svg class="a" style="left:467px;top:64px;" width="15" height="16" viewBox="0 0 15 16"><path d="M0 5L4 1V5Z" fill="#9199A0"/><path d="M4.8 0H10V14H0V5.8H4.8Z" fill="#9199A0"/><g transform="translate(3.5,5)"><path d="M2.5 1Q2.5 0 3.5 0H6Q7 0 7 1V4.5Q7 5.5 6 5.5H3.6Q2.8 5.5 2.8 6.3V7.2H1Q0 7.2 0 6.2V3.5Q0 2.5 1 2.5H5V2H2.5Z" fill="#3D8FD1"/><path d="M7.5 9Q7.5 10 6.5 10H4Q3 10 3 9V5.5Q3 4.5 4 4.5H6.4Q7.2 4.5 7.2 3.7V2.8H9Q10 2.8 10 3.8V6.5Q10 7.5 9 7.5H5V8H7.5Z" fill="#F2C42C"/></g></svg>
<div class="t" style="left:485px;top:65px;font-size:13px;line-height:13px;color:#629755;font-family:'Liberation Sans',sans-serif;letter-spacing:-0.099px;">dataset.py</div>
<svg class="a" style="left:551px;top:67px;" width="8" height="8" viewBox="0 0 8 8"><path d="M0.5 0.5L7.5 7.5M7.5 0.5L0.5 7.5" stroke="#7C7E80" stroke-width="1"/></svg>
<svg class="a" style="left:1885px;top:66px;" width="4" height="11" viewBox="0 0 4 11"><circle cx="2" cy="1.6" r="1.5" fill="#AFB1B3"/><circle cx="2" cy="5.5" r="1.5" fill="#AFB1B3"/><circle cx="2" cy="9.4" r="1.5" fill="#AFB1B3"/></svg>
<div class="lnum" style="top:101px">128</div>
<div class="lnum" style="top:123px">129</div>
<div class="lnum" style="top:145px">130</div>
<div class="lnum" style="top:167px">131</div>
<div class="a" style="left:464px;top:108px;width:1px;height:20px;background:#393B3D;"></div>
<div class="a" style="left:464px;top:151px;width:1px;height:10px;background:#393B3D;"></div>
<div class="code" style="left:466px;top:101px"><span style="color:#A9B7C6">parser.add_argument(</span><span style="color:#6A8759">'-e'</span><span style="color:#CC7832">, </span><span style="color:#6A8759">'--epochs'</span><span style="color:#CC7832">, </span><span style="color:#AA4926">metavar</span><span style="color:#A9B7C6">=</span><span style="color:#6A8759">'E'</span><span style="color:#CC7832">, </span><span style="color:#AA4926">type</span><span style="color:#A9B7C6">=</span><span style="color:#8888C6">int</span><span style="color:#CC7832">, </span><span style="color:#AA4926">default</span><span style="color:#A9B7C6">=</span><span style="color:#6897BB">5</span><span style="color:#CC7832">,</span></div>
<div class="code" style="left:626px;top:123px"><span style="color:#AA4926">help</span><span style="color:#A9B7C6">=</span><span style="color:#6A8759">'Number of epochs'</span><span style="color:#CC7832">, </span><span style="color:#AA4926">dest</span><span style="color:#A9B7C6">=</span><span style="color:#6A8759">'epochs'</span><span style="color:#A9B7C6">)</span></div>
<div class="code" style="left:466px;top:145px"><span style="color:#A9B7C6">parser.add_argument(</span><span style="color:#6A8759">'-b'</span><span style="color:#CC7832">, </span><span style="color:#6A8759">'--batch-size'</span><span style="color:#CC7832">, </span><span style="color:#AA4926">metavar</span><span style="color:#A9B7C6">=</span><span style="color:#6A8759">'B'</span><span style="color:#CC7832">, </span><span style="color:#AA4926">type</span><span style="color:#A9B7C6">=</span><span style="color:#8888C6">int</span><span style="color:#CC7832">, </span><span style="color:#AA4926">nargs</span><span style="color:#A9B7C6">=</span><span style="color:#6A8759">'?'</span><span style="color:#CC7832">, </span><span style="color:#AA4926">default</span><span style="color:#A9B7C6">=</span><span style="color:#6897BB">1</span><span style="color:#CC7832">,</span></div>
<div class="code" style="left:626px;top:167px"><span style="color:#AA4926">help</span><span style="color:#A9B7C6">=</span><span style="color:#6A8759">'Batch size'</span><span style="color:#CC7832">, </span><span style="color:#AA4926">dest</span><span style="color:#A9B7C6">=</span><span style="color:#6A8759">'batchsize'</span><span style="color:#A9B7C6">)</span></div>
<div class="a" style="left:1394px;top:85px;width:1px;height:76px;background:#3B3B3B;"></div>
<svg class="a" style="left:1769px;top:92px;" width="13" height="11" viewBox="0 0 13 11"><path d="M6.5 0L13 11H0Z" fill="#D9A21F"/><rect x="5.8" y="3.5" width="1.4" height="4" fill="#2B2B2B"/><rect x="5.8" y="8.3" width="1.4" height="1.4" fill="#2B2B2B"/></svg>
<div class="t" style="left:1784px;top:92px;font-size:13px;line-height:13px;color:#BBBBBB;font-family:'Liberation Sans',sans-serif;letter-spacing:0.770px;">2</div>
<svg class="a" style="left:1799px;top:92px;" width="13" height="11" viewBox="0 0 13 11"><path d="M6.5 0L13 11H0Z" fill="#857B64"/><rect x="5.8" y="3.5" width="1.4" height="4" fill="#2B2B2B"/><rect x="5.8" y="8.3" width="1.4" height="1.4" fill="#2B2B2B"/></svg>
<div class="t" style="left:1814px;top:92px;font-size:13px;line-height:13px;color:#BBBBBB;font-family:'Liberation Sans',sans-serif;letter-spacing:0.770px;">8</div>
<svg class="a" style="left:1829px;top:92px;" width="13" height="14" viewBox="0 0 13 14"><path d="M1 5L5 9L12 1" fill="none" stroke="#499C54" stroke-width="2.4"/><path d="M0 12.5L2 10.5L4 12.5L6 10.5L8 12.5L10 10.5L12 12.5" fill="none" stroke="#499C54" stroke-width="1"/></svg>
<div class="t" style="left:1844px;top:92px;font-size:13px;line-height:13px;color:#BBBBBB;font-family:'Liberation Sans',sans-serif;letter-spacing:0.770px;">8</div>
<svg class="a" style="left:1861px;top:95px;" width="10" height="6" viewBox="0 0 10 6"><path d="M0.5 5.5L5 1L9.5 5.5" fill="none" stroke="#AFB1B3" stroke-width="1.3"/></svg>
<svg class="a" style="left:1882px;top:95px;" width="10" height="6" viewBox="0 0 10 6"><path d="M0.5 0.5L5 5L9.5 0.5" fill="none" stroke="#AFB1B3" stroke-width="1.3"/></svg>
<div class="a" style="left:1881px;top:111px;width:2px;height:50px;background:#4A7FB0;"></div>
<div class="a" style="left:1885px;top:111px;width:14px;height:2px;background:#D9A21F;"></div>
<div class="a" style="left:1885px;top:113px;width:14px;height:2px;background:#857B64;"></div>
<div class="a" style="left:1885px;top:157px;width:14px;height:2px;background:#D9A21F;"></div>
<div class="a" style="left:1890px;top:121px;width:8px;height:34px;background:#4F4F4F;"></div>
<div class="a" style="left:363px;top:161px;width:1536px;height:24px;background:#313335;"></div>
<div class="a" style="left:363px;top:161px;width:1536px;height:1px;background:#323232;"></div>
<div class="t" style="left:438px;top:167px;font-size:13px;line-height:13px;color:#BBBBBB;font-family:'Liberation Sans',sans-serif;letter-spacing:-0.225px;">get_args()</div>
<div class="t" style="left:28px;top:193px;font-size:13px;line-height:13px;color:#BBBBBB;font-family:'Liberation Sans',sans-serif;letter-spacing:-0.615px;">Run:</div>
<svg class="a" style="left:73px;top:192px;" width="15" height="15" viewBox="0 0 15 15"><g transform="translate(0.5,1) scale(1.3)"><path d="M2.5 1Q2.5 0 3.5 0H6Q7 0 7 1V4.5Q7 5.5 6 5.5H3.6Q2.8 5.5 2.8 6.3V7.2H1Q0 7.2 0 6.2V3.5Q0 2.5 1 2.5H5V2H2.5Z" fill="#3D8FD1"/><path d="M7.5 9Q7.5 10 6.5 10H4Q3 10 3 9V5.5Q3 4.5 4 4.5H6.4Q7.2 4.5 7.2 3.7V2.8H9Q10 2.8 10 3.8V6.5Q10 7.5 9 7.5H5V8H7.5Z" fill="#F2C42C"/></g><circle cx="12.2" cy="12.8" r="2" fill="#1ED325" stroke="#2B2B2B" stroke-width="0.6"/></svg>
<div class="t" style="left:92px;top:193px;font-size:13px;line-height:13px;color:#BBBBBB;font-family:'Liberation Sans',sans-serif;letter-spacing:0.142px;">train</div>
<svg class="a" style="left:125px;top:196px;" width="8" height="8" viewBox="0 0 8 8"><path d="M0.5 0.5L7.5 7.5M7.5 0.5L0.5 7.5" stroke="#7C7E80" stroke-width="1"/></svg>
<svg class="a" style="left:1853px;top:192px;" width="14" height="14" viewBox="0 0 14 14"><g transform="translate(7,7)" fill="#AFB1B3"><circle r="5"/><rect x="-1.7" y="-6.8" width="3.4" height="13.6" rx="0.6"/><rect x="-1.7" y="-6.8" width="3.4" height="13.6" rx="0.6" transform="rotate(60)"/><rect x="-1.7" y="-6.8" width="3.4" height="13.6" rx="0.6" transform="rotate(120)"/><circle r="2.2" fill="#3C3F41"/></g></svg>
<div class="a" style="left:1880px;top:198px;width:12px;height:2px;background:#AFB1B3;"></div>
<svg class="a" style="left:29px;top:220px;" width="15" height="15" viewBox="0 0 15 15"><path d="M11 6A5 5 0 1 0 7 12" fill="none" stroke="#499C54" stroke-width="2"/><path d="M9 0.5L14.5 5L9 8.5Z" fill="#499C54"/><rect x="8" y="9" width="6" height="6" fill="#AFB1B3"/></svg>
<svg class="a" style="left:29px;top:246px;" width="14" height="14" viewBox="0 0 14 14"><path d="M2 12L8 6" stroke="#AFB1B3" stroke-width="3" stroke-linecap="round"/><path d="M9.5 1A3.8 3.8 0 1 0 13 4.5L11 6.5L8 6L7.5 3L9.5 1Z" fill="#AFB1B3"/></svg>
<div class="a" style="left:26px;top:269px;width:20px;height:1px;background:#515151;"></div>
<div class="a" style="left:31px;top:281px;width:10px;height:10px;background:#C75450;"></div>
<div class="a" style="left:26px;top:302px;width:20px;height:1px;background:#515151;"></div>
<svg class="a" style="left:30px;top:313px;" width="12" height="12" viewBox="0 0 12 12"><rect x="0" y="0" width="6" height="5" fill="#AFB1B3"/><rect x="7" y="0" width="5" height="5" fill="#AFB1B3"/><rect x="0" y="7" width="12" height="4" fill="#AFB1B3"/></svg>
<div class="a" style="left:26px;top:335px;width:20px;height:1px;background:#515151;"></div>
<svg class="a" style="left:29px;top:345px;" width="15" height="15" viewBox="0 0 15 15"><path d="M8 1L14 7L11.5 8L9 10.5L8 13L2 7L4.5 6L7 3.5Z" fill="#AFB1B3"/><path d="M5 10L0.5 14.5" stroke="#AFB1B3" stroke-width="1.4"/></svg>
<svg class="a" style="left:59px;top:222px;" width="12" height="13" viewBox="0 0 12 13"><path d="M6 1V13M1 6L6 1L11 6" fill="none" stroke="#5F6163" stroke-width="1.4"/></svg>
<svg class="a" style="left:59px;top:248px;" width="12" height="13" viewBox="0 0 12 13"><path d="M6 0V12M1 7L6 12L11 7" fill="none" stroke="#5F6163" stroke-width="1.4"/></svg>
<div class="a" style="left:54px;top:269px;width:22px;height:22px;background:#55585B;border-radius:3px"></div>
<svg class="a" style="left:58px;top:273px;" width="14" height="14" viewBox="0 0 14 14"><path d="M1 1.5H13M1 6H11A2.5 2.5 0 0 1 11 11H7" fill="none" stroke="#AFB1B3" stroke-width="1.5"/><path d="M7.5 8.5L5 11L7.5 13.5Z" fill="#AFB1B3"/><rect x="1" y="10" width="2.5" height="1.6" fill="#AFB1B3"/></svg>
<div class="a" style="left:54px;top:295px;width:22px;height:22px;background:#55585B;border-radius:3px"></div>
<svg class="a" style="left:58px;top:299px;" width="14" height="14" viewBox="0 0 14 14"><path d="M1 13H13" stroke="#AFB1B3" stroke-width="1.5"/><rect x="1" y="2" width="4" height="1.5" fill="#AFB1B3"/><rect x="1" y="7" width="4" height="1.5" fill="#AFB1B3"/><path d="M9.5 1V9" stroke="#AFB1B3" stroke-width="1.5"/><path d="M6.5 6.5L9.5 10L12.5 6.5Z" fill="#AFB1B3"/></svg>
<svg class="a" style="left:58px;top:326px;" width="14" height="13" viewBox="0 0 14 13"><rect x="3" y="0" width="8" height="3" fill="#AFB1B3"/><path d="M0 4H14V10H11V8H3V10H0Z" fill="#AFB1B3"/><rect x="3.5" y="8.5" width="7" height="4" fill="none" stroke="#AFB1B3" stroke-width="1.2"/></svg>
<svg class="a" style="left:60px;top:351px;" width="10" height="13" viewBox="0 0 10 13"><rect x="0" y="1.5" width="10" height="2" fill="#AFB1B3"/><rect x="3" y="0" width="4" height="1.6" fill="#AFB1B3"/><path d="M1 4.5H9L8.3 13H1.7Z" fill="#AFB1B3"/></svg>
<svg class="a" style="left:1905px;top:68px;" width="12" height="13" viewBox="0 0 12 13"><g fill="#AFB1B3"><ellipse cx="6" cy="2" rx="5.5" ry="2"/><path d="M0.5 3.6Q6 6.6 11.5 3.6V5.2Q6 8.2 0.5 5.2Z"/><path d="M0.5 6.6Q6 9.6 11.5 6.6V8.2Q6 11.2 0.5 8.2Z"/><path d="M0.5 9.6Q6 12.6 11.5 9.6V11Q6 14 0.5 11Z"/></g></svg>
<div class="t" style="left:1914.0px;top:85.0px;font-size:11px;line-height:11px;color:#BBBBBB;font-family:'Liberation Sans',sans-serif;letter-spacing:0.114px;transform-origin:0 0;transform:rotate(90deg)">Database</div>
<svg class="a" style="left:1905px;top:156px;" width="12" height="10" viewBox="0 0 12 10"><g fill="#AFB1B3"><rect x="0" y="0" width="2" height="2"/><rect x="3" y="0" width="6" height="2"/><rect x="10" y="0" width="2" height="2"/><rect x="0" y="3.5" width="2" height="3"/><rect x="3" y="3.5" width="6" height="3"/><rect x="10" y="3.5" width="2" height="3"/><rect x="0" y="8" width="2" height="2"/><rect x="3" y="8" width="6" height="2"/><rect x="10" y="8" width="2" height="2"/></g></svg>
<div class="t" style="left:1913.5px;top:172.0px;font-size:11px;line-height:11px;color:#BBBBBB;font-family:'Liberation Sans',sans-serif;letter-spacing:0.011px;transform-origin:0 0;transform:rotate(90deg)">SciView</div>
<svg class="a" style="left:32px;top:1013px;" width="10" height="13" viewBox="0 0 10 13"><circle cx="2" cy="2" r="1.6" fill="#AFB1B3"/><circle cx="2" cy="11" r="1.6" fill="#AFB1B3"/><circle cx="8" cy="3" r="1.6" fill="#AFB1B3"/><path d="M2 2V11M8 3Q8 7 2.5 8" fill="none" stroke="#AFB1B3" stroke-width="1.4"/></svg>
<div class="t" style="left:47px;top:1014px;font-size:12px;line-height:12px;color:#BBBBBB;font-family:'Liberation Sans',sans-serif;letter-spacing:-0.111px;">Git</div>
<svg class="a" style="left:82px;top:1014px;" width="13" height="13" viewBox="0 0 13 13"><path d="M0 0L9 5L0 10Z" fill="#AFB1B3"/><circle cx="9.5" cy="10" r="2" fill="#1ED325"/></svg>
<div class="t" style="left:97px;top:1014px;font-size:12px;line-height:12px;color:#FFFFFF;font-family:'Liberation Sans',sans-serif;letter-spacing:-0.338px;">Run</div>
<svg class="a" style="left:139px;top:1015px;" width="10" height="9" viewBox="0 0 10 9"><g fill="#AFB1B3"><rect x="0" y="0" width="2" height="2"/><rect x="3" y="0" width="7" height="2"/><rect x="0" y="3.5" width="2" height="2"/><rect x="3" y="3.5" width="7" height="2"/><rect x="0" y="7" width="2" height="2"/><rect x="3" y="7" width="7" height="2"/></g></svg>
<div class="t" style="left:154px;top:1014px;font-size:12px;line-height:12px;color:#BBBBBB;font-family:'Liberation Sans',sans-serif;letter-spacing:-0.612px;">TODO</div>
<svg class="a" style="left:207px;top:1013px;" width="12" height="12" viewBox="0 0 12 12"><circle cx="6" cy="6" r="6" fill="#AFB1B3"/><rect x="5" y="2.5" width="2" height="4.5" fill="#3C3F41"/><rect x="5" y="8" width="2" height="2" fill="#3C3F41"/></svg>
<div class="t" style="left:223px;top:1014px;font-size:12px;line-height:12px;color:#BBBBBB;font-family:'Liberation Sans',sans-serif;letter-spacing:-0.210px;">Problems</div>
<svg class="a" style="left:294px;top:1013px;" width="12" height="11" viewBox="0 0 12 11"><rect x="0" y="0" width="12" height="11" fill="#AFB1B3"/><path d="M2 2.5L5 5L2 7.5" fill="none" stroke="#3C3F41" stroke-width="1.2"/><rect x="6" y="8" width="4" height="1.2" fill="#3C3F41"/></svg>
<div class="t" style="left:310px;top:1014px;font-size:12px;line-height:12px;color:#BBBBBB;font-family:'Liberation Sans',sans-serif;letter-spacing:-0.043px;">Terminal</div>
<svg class="a" style="left:378px;top:1012px;" width="13" height="14" viewBox="0 0 13 14"><path d="M6.5 0L13 3.2L6.5 6.4L0 3.2Z" fill="#AFB1B3"/><path d="M0 6L6.5 9.2L13 6M0 9L6.5 12.2L13 9" fill="none" stroke="#AFB1B3" stroke-width="1.3"/></svg>
<div class="t" style="left:396px;top:1014px;font-size:12px;line-height:12px;color:#BBBBBB;font-family:'Liberation Sans',sans-serif;letter-spacing:-0.293px;">Python Packages</div>
<svg class="a" style="left:511px;top:1013px;" width="12" height="12" viewBox="0 0 12 12"><g transform="scale(0.86)"><path d="M6.8 0.5C4.2 0.5 4.3 1.6 4.3 1.6V2.9H6.9V3.3H3.2C3.2 3.3 1.5 3.1 1.5 5.8C1.5 8.5 3 8.4 3 8.4H3.9V7.1C3.9 7.1 3.8 5.6 5.4 5.6H8C8 5.6 9.5 5.6 9.5 4.1V1.9C9.5 1.9 9.7 0.5 6.8 0.5Z" fill="#AFB1B3"/><path d="M7.2 13.5C9.8 13.5 9.7 12.4 9.7 12.4V11.1H7.1V10.7H10.8C10.8 10.7 12.5 10.9 12.5 8.2C12.5 5.5 11 5.6 11 5.6H10.1V6.9C10.1 6.9 10.2 8.4 8.6 8.4H6C6 8.4 4.5 8.4 4.5 9.9V12.1C4.5 12.1 4.3 13.5 7.2 13.5Z" fill="#AFB1B3"/></g></svg>
<div class="t" style="left:527px;top:1014px;font-size:12px;line-height:12px;color:#BBBBBB;font-family:'Liberation Sans',sans-serif;letter-spacing:-0.123px;">Python Console</div>
<svg class="a" style="left:1820px;top:1013px;" width="13" height="13" viewBox="0 0 13 13"><path d="M6.5 0A6.5 6.5 0 1 0 13 6.5V13H6.5Z" fill="#499C54"/><path d="M6.5 0A6.5 6.5 0 0 1 13 6.5V13H6.5A6.5 6.5 0 0 1 6.5 0Z" fill="#499C54"/><text x="4.3" y="10.5" font-family="Liberation Sans" font-weight="bold" font-size="9" fill="#fff">1</text></svg>
<div class="t" style="left:1837px;top:1014px;font-size:12px;line-height:12px;color:#BBBBBB;font-family:'Liberation Sans',sans-serif;letter-spacing:-0.338px;">Event Log</div>
<svg class="a" style="left:6px;top:1034px;" width="13" height="13" viewBox="0 0 13 13"><rect x="3.5" y="0.5" width="9" height="9" fill="none" stroke="#AFB1B3"/><path d="M0.5 3V12.5H10" fill="none" stroke="#AFB1B3"/></svg>
<div class="t" style="left:28px;top:1033px;font-size:13px;line-height:13px;color:#BBBBBB;font-family:'Liberation Sans',sans-serif;letter-spacing:0.118px;">Download pre-built shared indexes: Reduce the indexing time and CPU load with pre-built Python packages shared indexes // Always download // Download once // Don't show again // Configure... (today 19:08)</div>
<div class="t" style="left:1487px;top:1034px;font-size:12.5px;line-height:12.5px;color:#BBBBBB;font-family:'Liberation Sans',sans-serif;letter-spacing:-0.312px;">132:101</div>
<div class="t" style="left:1543px;top:1034px;font-size:12.5px;line-height:12.5px;color:#BBBBBB;font-family:'Liberation Sans',sans-serif;letter-spacing:-1.160px;">CRLF</div>
<div class="t" style="left:1583px;top:1034px;font-size:12.5px;line-height:12.5px;color:#BBBBBB;font-family:'Liberation Sans',sans-serif;letter-spacing:-0.283px;">UTF-8</div>
<div class="t" style="left:1629px;top:1034px;font-size:12.5px;line-height:12.5px;color:#BBBBBB;font-family:'Liberation Sans',sans-serif;letter-spacing:0.121px;">4 spaces</div>
<div class="t" style="left:1692px;top:1034px;font-size:12.5px;line-height:12.5px;color:#BBBBBB;font-family:'Liberation Sans',sans-serif;letter-spacing:0.096px;">Python 3.8 (pancreas)</div>
<div class="t" style="left:1846px;top:1034px;font-size:12.5px;line-height:12.5px;color:#BBBBBB;font-family:'Liberation Sans',sans-serif;letter-spacing:0.300px;">master</div>
<svg class="a" style="left:1831px;top:1031px;" width="10" height="17" viewBox="0 0 10 17"><circle cx="2" cy="2.5" r="1.7" fill="#AFB1B3"/><circle cx="2" cy="14.5" r="1.7" fill="#AFB1B3"/><circle cx="8" cy="2.5" r="1.7" fill="#AFB1B3"/><path d="M2 2.5V14.5M8 2.5C8 8 3 8 2.5 12" fill="none" stroke="#AFB1B3" stroke-width="1.4"/></svg>
<svg class="a" style="left:1895px;top:1034px;" width="13" height="12" viewBox="0 0 13 12"><path d="M3.5 6V3.5A2.5 2.5 0 0 1 8.5 3.5" fill="none" stroke="#AFB1B3" stroke-width="1.4"/><rect x="4" y="6" width="8" height="6" fill="#AFB1B3"/></svg>
<div class="a" style="left:0px;top:1050px;width:1920px;height:8px;background:linear-gradient(90deg,#CFE3EE 0%,#D0E2EE 50%,#CCD6E8 100%);"></div>
<div class="a" style="left:150px;top:1050px;width:36px;height:8px;background:#E6F1F7;"></div>
<div class="a" style="left:18px;top:1056px;width:8px;height:2px;background:#1A1A1A;"></div>
<div class="a" style="left:53px;top:1056px;width:7px;height:2px;background:#E04848;"></div>
<div class="a" style="left:90px;top:1056px;width:8px;height:2px;background:#3CC4C8;"></div>
<div class="a" style="left:160px;top:1056px;width:16px;height:2px;background:#1FB972;"></div>
<div class="a" style="left:197px;top:1056px;width:16px;height:2px;background:#1C6FD6;"></div>
<div class="a" style="left:236px;top:1056px;width:12px;height:2px;background:#1B56D0;"></div>
<div class="a" style="left:274px;top:1056px;width:13px;height:2px;background:#4AA3E0;"></div>
<div class="a" style="left:1712px;top:1057px;width:4px;height:1px;background:#222;"></div>
<div class="a" style="left:1737px;top:1057px;width:5px;height:1px;background:#222;"></div>
<div class="a" style="left:1807px;top:1057px;width:2px;height:1px;background:#222;"></div>
<div class="a" style="left:1880px;top:1057px;width:15px;height:1px;background:#111;"></div>
<div class="a" style="left:1915px;top:1050px;width:1px;height:8px;background:#9AA0AA;"></div>
</body></html>
